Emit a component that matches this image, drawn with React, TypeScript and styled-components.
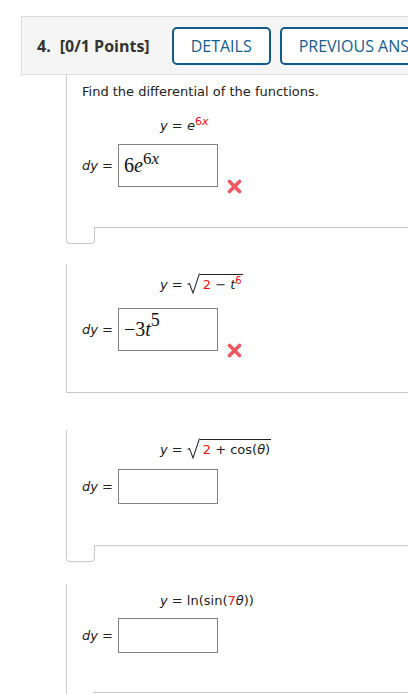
import React from 'react'
import styled, { createGlobalStyle } from 'styled-components'

const GlobalStyle = createGlobalStyle`
  html, body {
    margin: 0;
    padding: 0;
    background: #ffffff;
    overflow: hidden;
  }
  body {
    font-family: 'DejaVu Sans', Verdana, sans-serif;
    color: #222222;
  }
`

const Page = styled.div`
  width: 760px;
  padding: 16px 0 0 21px;
`

//Question header
const Header = styled.div`
  display: flex;
  align-items: center;
  height: 59px;
  box-sizing: border-box;
  padding: 0 15px;
  background: #f5f5f5;
  border: 1px solid #dedede;
`
const QuestionNo = styled.span`
  font-family: 'Open Sans', sans-serif;
  font-weight: 700;
  font-size: 16px;
  color: #333333;
  margin-right: 22px;
  span {
    margin-right: 9px;
  }
`
const HeaderBtn = styled.button`
  height: 38px;
  box-sizing: border-box;
  margin-right: 9px;
  padding: 0 17px;
  border: 2px solid #105b8b;
  border-radius: 5px;
  background: #ffffff;
  font-family: 'Open Sans', sans-serif;
  font-size: 16px;
  font-weight: 500;
  color: #155d8d;
  white-space: nowrap;
`

//Parts
const Parts = styled.div`
  margin-left: 45px;
`
const PartWrap = styled.div<{ $after: number }>`
  margin-bottom: ${(p) => p.$after}px;
`
const PartBody = styled.div<{ $top: number; $bottom: number; $closed?: boolean }>`
  border-left: 1px solid #c9c9c9;
  border-bottom: ${(p) => (p.$closed ? '1px solid #c9c9c9' : 'none')};
  padding: ${(p) => `${p.$top}px 0 ${p.$bottom}px 15px`};
`
const Foot = styled.div`
  display: flex;
  height: 17px;
`
const Tab = styled.div`
  width: 29px;
  height: 17px;
  box-sizing: border-box;
  border: 1px solid #c9c9c9;
  border-top: none;
  border-radius: 0 0 4px 4px;
`
const Rule = styled.div`
  flex: 1;
  margin-left: -1px;
  border-top: 1px solid #c9c9c9;
`

const Prompt = styled.p`
  margin: 0 0 18px;
  font-size: 13px;
  line-height: 16px;
`
const Equation = styled.div`
  margin-left: 78px;
  font-size: 13px;
  line-height: 16px;
  white-space: nowrap;
`
const V = styled.i`
  font-style: italic;
`
const Red = styled.span`
  color: #ee1111;
`
const Sup = styled.span<{ $size?: number; $raise?: number }>`
  position: relative;
  top: ${(p) => -(p.$raise ?? 5)}px;
  font-size: ${(p) => p.$size ?? 11}px;
  line-height: 0;
`
const RadicalSign = styled.svg`
  vertical-align: -5px;
  margin-left: 4px;
`
const Radicand = styled.span`
  display: inline-block;
  border-top: 1px solid #222222;
  padding: 2px 1px 0 3px;
  line-height: 16px;
`

const AnswerRow = styled.div<{ $gap: number }>`
  display: flex;
  align-items: center;
  margin-top: ${(p) => p.$gap}px;
`
const Label = styled.span`
  font-size: 13px;
  margin-right: 5px;
  white-space: nowrap;
`
const AnswerBox = styled.div<{ $h: number }>`
  width: 100px;
  height: ${(p) => p.$h}px;
  box-sizing: border-box;
  border: 1px solid #808080;
  background: #ffffff;
  padding: 10px 0 0 5px;
  font-family: 'Liberation Serif', 'Times New Roman', serif;
  font-size: 20px;
  line-height: 20px;
  color: #111111;
  white-space: nowrap;
`
const Mark = styled.svg`
  align-self: flex-end;
  margin: 0 0 -7px 9px;
`

const Radical = ({ children }: { children: React.ReactNode }) => (
  <>
    <RadicalSign width='13' height='21' viewBox='0 0 13 21'>
      <path d='M0.5 11.5 L2.5 10.5 L6 20 L12.5 0.5' fill='none' stroke='#333' strokeWidth='1.1' />
    </RadicalSign>
    <Radicand>{children}</Radicand>
  </>
)

const WrongMark = () => (
  <Mark width='15' height='15' viewBox='0 0 15 15'>
    <path d='M2.5 2.5 L12.5 12.5 M12.5 2.5 L2.5 12.5' stroke='#ee5a5f' strokeWidth='3.6' strokeLinecap='round' />
  </Mark>
)

interface PartProps {
  top: number
  bottom: number
  after?: number
  tab?: boolean
  children: React.ReactNode
}

const Part = ({ top, bottom, after = 20, tab, children }: PartProps) => (
  <PartWrap $after={after}>
    <PartBody $top={top} $bottom={bottom} $closed={!tab}>
      {children}
    </PartBody>
    <Foot>
      {tab && (
        <>
          <Tab />
          <Rule />
        </>
      )}
    </Foot>
  </PartWrap>
)

const App = () => {
  return (
    <Page>
      <GlobalStyle />
      <Header>
        <QuestionNo>
          <span>4.</span>[0/1 Points]
        </QuestionNo>
        <HeaderBtn>DETAILS</HeaderBtn>
        <HeaderBtn>PREVIOUS ANSWERS</HeaderBtn>
      </Header>

      <Parts>
        <Part top={9} bottom={40} tab>
          <Prompt>Find the differential of the functions.</Prompt>
          <Equation>
            <V>y</V> = <V>e</V>
            <Sup>
              <Red>
                6<V>x</V>
              </Red>
            </Sup>
          </Equation>
          <AnswerRow $gap={10}>
            <Label>
              <V>dy</V> =
            </Label>
            <AnswerBox $h={43}>
              6<V>e</V>
              <Sup $size={17} $raise={8}>
                6<V>x</V>
              </Sup>
            </AnswerBox>
            <WrongMark />
          </AnswerRow>
        </Part>

        <Part top={9} bottom={41}>
          <Equation>
            <V>y</V> =
            <Radical>
              <Red>2</Red> − <V>t</V>
              <Sup $size={10}>
                <Red>6</Red>
              </Sup>
            </Radical>
          </Equation>
          <AnswerRow $gap={14}>
            <Label>
              <V>dy</V> =
            </Label>
            <AnswerBox $h={43}>
              −3<V>t</V>
              <Sup $size={18} $raise={10}>
                5
              </Sup>
            </AnswerBox>
            <WrongMark />
          </AnswerRow>
        </Part>

        <Part top={8} bottom={41} after={22} tab>
          <Equation>
            <V>y</V> =
            <Radical>
              <Red>2</Red> + cos(<V>θ</V>)
            </Radical>
          </Equation>
          <AnswerRow $gap={10}>
            <Label>
              <V>dy</V> =
            </Label>
            <AnswerBox $h={35} />
          </AnswerRow>
        </Part>

        <Part top={9} bottom={39} tab>
          <Equation>
            <V>y</V> = ln(sin(<Red>7</Red>
            <V>θ</V>))
          </Equation>
          <AnswerRow $gap={9}>
            <Label>
              <V>dy</V> =
            </Label>
            <AnswerBox $h={35} />
          </AnswerRow>
        </Part>
      </Parts>
    </Page>
  )
}

export default App
